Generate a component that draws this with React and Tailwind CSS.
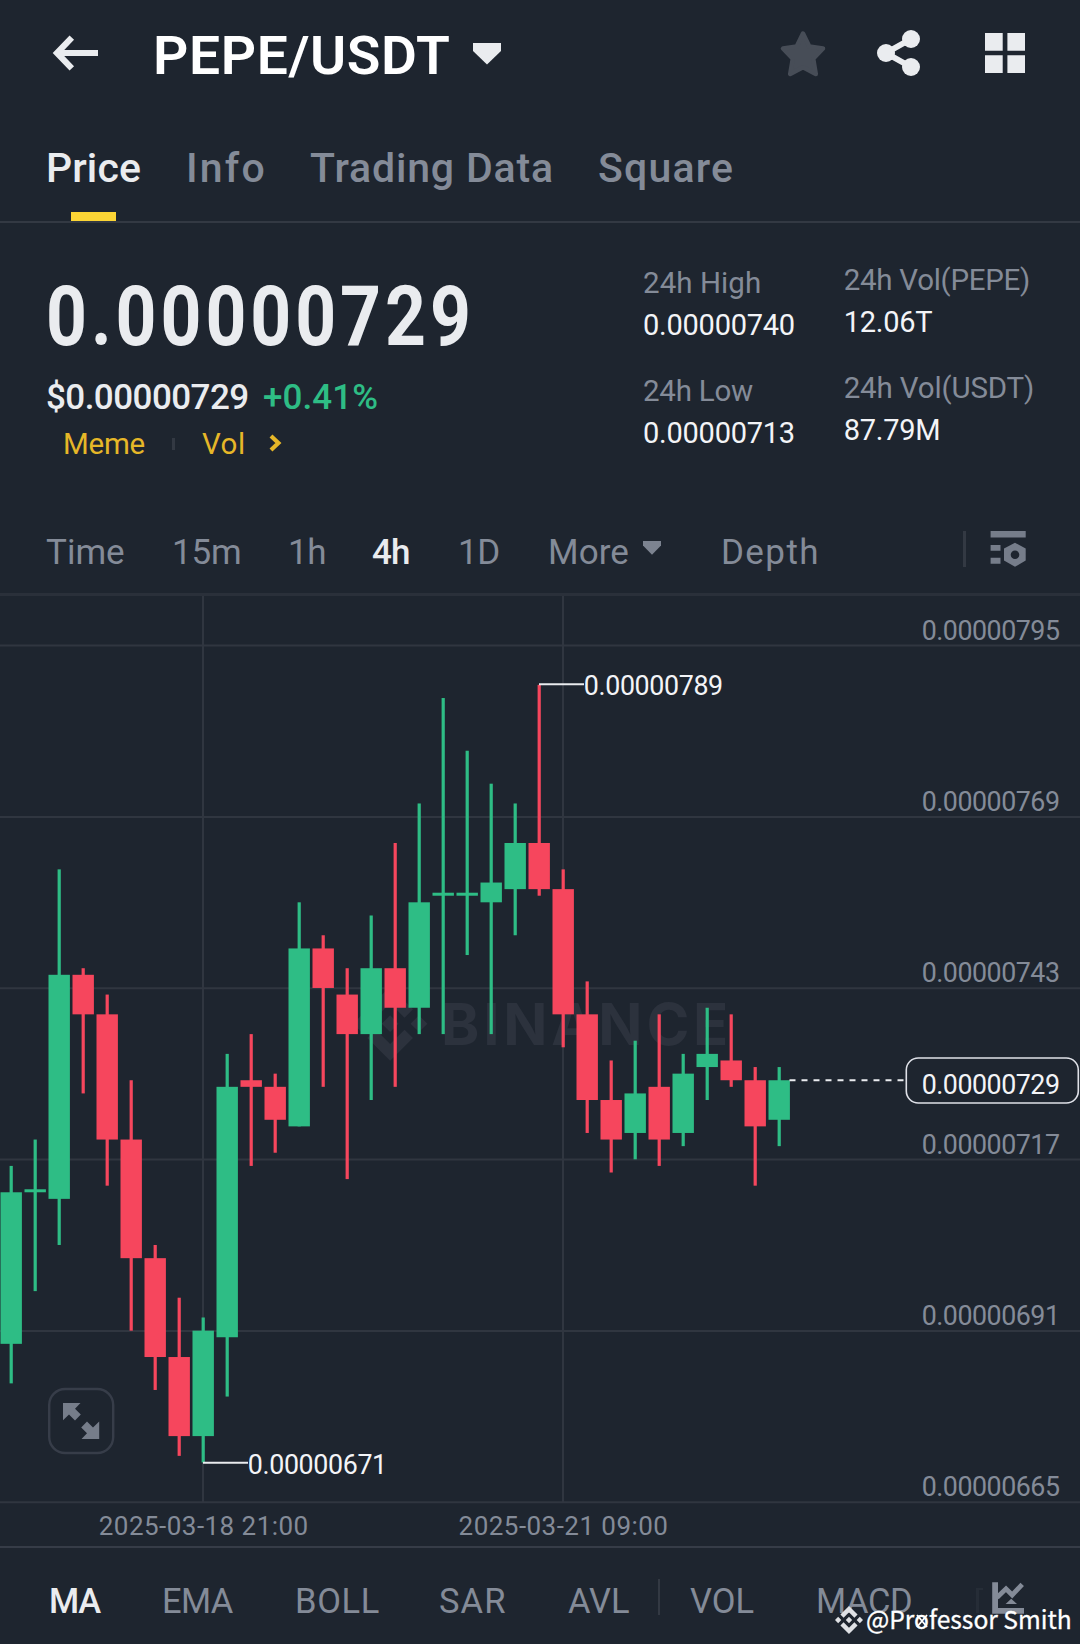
const UP = "#2ebd85";
const DOWN = "#f6465d";
const GRID = "#303640";

const BINANCE_PATH =
  "M16.624 13.9202l2.7175 2.7154-7.353 7.353-7.353-7.352 2.7175-2.7164 4.6355 4.6595 4.6356-4.6595zm4.6366-4.6366L24 12l-2.7154 2.7164L18.5682 12l2.6924-2.7164zm-9.272.001l2.7163 2.6914-2.7164 2.7174v-.001L9.2721 12l2.7164-2.7154zm-9.2722-.001L5.4088 12l-2.6914 2.6924L0 12l2.7164-2.7164zM11.9885.0115l7.353 7.329-2.7174 2.7154-4.6356-4.6356-4.6355 4.6595-2.7174-2.7154 7.353-7.353z";

// [open, high, low, close] in units of 1e-8 USDT
const candles = [
  [689, 716, 683, 712],
  [712, 720, 697, 712],
  [711, 761, 704, 745],
  [745, 746, 727, 739],
  [739, 742, 713, 720],
  [720, 729, 691, 702],
  [702, 704, 682, 687],
  [687, 696, 672, 675],
  [675, 693, 671, 691],
  [690, 733, 681, 728],
  [729, 736, 716, 728],
  [728, 730, 718, 723],
  [722, 756, 722, 749],
  [749, 751, 728, 743],
  [742, 746, 714, 736],
  [736, 754, 726, 746],
  [746, 765, 728, 740],
  [740, 771, 736, 756],
  [757, 787, 736, 757],
  [757, 779, 748, 757],
  [756, 774, 736, 759],
  [758, 771, 751, 765],
  [765, 789, 757, 758],
  [758, 761, 734, 739],
  [739, 744, 721, 726],
  [726, 732, 715, 720],
  [721, 735, 717, 727],
  [728, 739, 716, 720],
  [721, 733, 719, 730],
  [731, 740, 726, 733],
  [732, 739, 728, 729],
  [729, 731, 713, 722],
  [723, 731, 719, 729],
];

const priceTicks = [795, 769, 743, 717, 691, 665];
const yOf = (p) => 645.3 + (795 - p) * 6.59;
const xOf = (i) => 11.2 + 24 * i;

function Candle({ i, data }) {
  const [open, high, low, close] = data;
  const color = close >= open ? UP : DOWN;
  const top = yOf(Math.max(open, close));
  const bottom = yOf(Math.min(open, close));
  const x = xOf(i);
  const flat = open === close;
  return (
    <g fill={color}>
      <rect x={x - 1.6} y={yOf(high)} width={3.2} height={yOf(low) - yOf(high)} />
      <rect x={x - 10.7} y={flat ? top - 3 : top} width={21.4} height={flat ? 3 : bottom - top} />
    </g>
  );
}

function Chart() {
  return (
    <svg width="1080" height="950" viewBox="0 596 1080 950" className="block font-[Roboto,sans-serif]">
      <g stroke={GRID} strokeWidth="2">
        <path d="M203 596V1502M563 596V1502" />
        {priceTicks.map((p) => (
          <path key={p} d={`M0 ${yOf(p) + 0.3}H1080`} />
        ))}
      </g>

      <g fill="#2c323d">
        <path d={BINANCE_PATH} transform="translate(353 986.5) scale(3.1)" />
        <text x="441" y="1045" fontSize="58" fontWeight="700" letterSpacing="3.8" fontFamily="Inter, sans-serif">
          BINANCE
        </text>
      </g>

      {candles.map((c, i) => (
        <Candle key={i} i={i} data={c} />
      ))}

      <g stroke="#eaecef" strokeWidth="2">
        <path d="M539 684.3H584" />
        <path d="M203 1462.7H248" />
        <path d="M789.5 1080.2H905" strokeDasharray="6 6" />
      </g>
      <rect x="906.3" y="1058" width="172" height="45" rx="12" fill="#1e252f" stroke="#dfe1e8" strokeWidth="1.6" />

      <g fontSize="26.8" letterSpacing="-0.48" fill="#848b98">
        {priceTicks.map((p) => (
          <text key={p} x="921.7" y={yOf(p) - 5.8}>
            {`0.00000${p}`}
          </text>
        ))}
        <text x="921.7" y="1094" fill="#f3f4f7">0.00000729</text>
        <text x="583.8" y="694.7" fill="#f3f4f7" letterSpacing="-0.36">0.00000789</text>
        <text x="247.8" y="1473.7" fill="#f3f4f7" letterSpacing="-0.36">0.00000671</text>
      </g>
      <g fontSize="26" letterSpacing="0.46" fill="#848b98">
        <text x="98.8" y="1534.7">2025-03-18 21:00</text>
        <text x="458.6" y="1534.7">2025-03-21 09:00</text>
      </g>

      <rect x="49.2" y="1389" width="64" height="64" rx="16" fill="#1e252f" stroke="#373d49" strokeWidth="2.4" />
      <g fill="#767d8a">
        <path d="M63 1403H80.5L75 1408.7L80.8 1414.5L75 1420.5L69 1414.5L63 1420.3Z" />
        <path d="M99.2 1439H81.5L87 1433.3L81.2 1427.5L87 1421.5L93 1427.5L99.2 1421.5Z" />
      </g>
    </svg>
  );
}

function Header() {
  return (
    <header className="flex h-[110px] items-center">
      <svg width="48" height="38" viewBox="51 34 48 38" className="-mt-1 ml-[51px]">
        <path d="M98 53H57M71.8 37.6L57 53L71.8 68.4" fill="none" stroke="#eaecef" strokeWidth="6.2" />
      </svg>
      <h1 className="mt-px ml-[54px] w-[318px] origin-left scale-x-[1.04] whitespace-nowrap text-[53px] leading-[60px] font-semibold tracking-[0.6px] text-white">
        PEPE/USDT
      </h1>
      <svg width="30" height="24" viewBox="472 42 30 24" className="-mt-[2px] ml-[1px]">
        <path d="M473 43H501V51L487 64.4L473 51Z" fill="#eaecef" />
      </svg>
      <svg width="48" height="50" viewBox="779 29 48 50" className="-mt-[2px] ml-[277px]">
        <path
          d="M803 33.5L809.3 46.5L823 48.5L813.2 58.6L815.8 74L803 67.2L790.2 74L792.8 58.6L783 48.5L796.7 46.5Z"
          fill="#474d57"
          stroke="#474d57"
          strokeWidth="4.5"
          strokeLinejoin="round"
        />
      </svg>
      <svg width="46" height="48" viewBox="876 29 46 48" className="-mt-1 ml-[49px]">
        <g fill="#eaecef">
          <circle cx="911" cy="39" r="9" />
          <circle cx="886" cy="53" r="9" />
          <circle cx="911" cy="67" r="9" />
        </g>
        <path d="M911 39L886 53L911 67" fill="none" stroke="#eaecef" strokeWidth="6" />
      </svg>
      <svg width="40" height="40" viewBox="0 0 40 40" className="-mt-1 ml-[63px]">
        <path d="M0 0H17.7V17.8H0ZM22.4 0H40V17.8H22.4ZM0 22.2H17.7V40H0ZM22.4 22.2H40V40H22.4Z" fill="#eaecef" />
      </svg>
    </header>
  );
}

const tabs = [
  { label: "Price", box: "w-[140px]", text: "tracking-[0.1px] text-[#eaecef]", active: true },
  { label: "Info", box: "w-[124px]", text: "tracking-[2.2px] text-[#848b98]" },
  { label: "Trading Data", box: "w-[288px]", text: "tracking-[0.84px] text-[#848b98]" },
  { label: "Square", box: "w-[160px]", text: "tracking-[1.19px] text-[#848b98]" },
];

function Tabs() {
  return (
    <nav className="flex h-[113px] border-b-2 border-[#333943] pl-[46px] text-[41px] leading-[56px] font-medium">
      {tabs.map((t) => (
        <div key={t.label} className={t.box}>
          <div className="inline-flex h-full flex-col items-center pt-[30px]">
            <span className={`whitespace-nowrap ${t.text}`}>{t.label}</span>
            {t.active && <span className="mt-auto h-[9px] w-[45px] bg-[#fcd535]" />}
          </div>
        </div>
      ))}
    </nav>
  );
}

function Stat({ label, value, labelClass }) {
  return (
    <div className="flex flex-col gap-2 whitespace-nowrap leading-[34px]">
      <span className={`text-[29.5px] text-[#848b98] ${labelClass}`}>{label}</span>
      <span className="text-[29px] tracking-[-0.24px] text-[#f3f4f7]">{value}</span>
    </div>
  );
}

function Summary() {
  return (
    <section className="flex h-[287px]">
      <div className="w-[643px] pt-[52px] pl-[46px]">
        <div className="origin-left scale-x-[0.86] whitespace-nowrap text-[83px] leading-[84px] font-bold tracking-[4.6px] text-[#eaecef]">
          0.00000729
        </div>
        <div className="mt-5 flex text-[35px] leading-[38px] font-medium">
          <span className="w-[217px] tracking-[-0.55px] text-[#eaecef]">$0.00000729</span>
          <span className="tracking-[0.1px] text-[#2ebd85]">+0.41%</span>
        </div>
        <div className="mt-[11px] flex items-center text-[29.5px] leading-8 text-[#e6b728]">
          <span className="ml-[17px] w-[109px] tracking-[-0.22px]">Meme</span>
          <span className="h-3 w-[3px] bg-[#333943]" />
          <span className="ml-[27px] w-[67px] tracking-[0.5px]">Vol</span>
          <svg width="14" height="18" viewBox="0 0 14 18" className="-mt-[2px]">
            <path d="M2 2L9.4 9L2 16" fill="none" stroke="#e6b728" strokeWidth="4.2" />
          </svg>
        </div>
      </div>
      <div className="flex w-[200.7px] flex-col gap-8 pt-[43px]">
        <Stat label="24h High" value="0.00000740" labelClass="tracking-[0.07px]" />
        <Stat label="24h Low" value="0.00000713" labelClass="tracking-[-0.24px]" />
      </div>
      <div className="flex flex-col gap-8 pt-10">
        <Stat label="24h Vol(PEPE)" value="12.06T" labelClass="tracking-[-0.28px]" />
        <Stat label="24h Vol(USDT)" value="87.79M" labelClass="tracking-[-0.15px]" />
      </div>
    </section>
  );
}

const intervals = [
  { label: "Time", cls: "w-[126px]" },
  { label: "15m", cls: "w-[116px] tracking-[-0.2px]" },
  { label: "1h", cls: "w-[84px] tracking-[-0.5px]" },
  { label: "4h", cls: "w-[86px] tracking-[-0.8px] font-medium text-[#eaecef]" },
  { label: "1D", cls: "w-[90px] tracking-[-0.4px]" },
  { label: "More", cls: "w-[95px] tracking-[0.1px]" },
];

function IntervalBar() {
  return (
    <div className="flex h-[86px] items-center border-b-[3px] border-[#2a303a] pt-[2px] pl-[46px] text-[35px] leading-10 text-[#848b98]">
      {intervals.map((t) => (
        <span key={t.label} className={`whitespace-nowrap ${t.cls}`}>
          {t.label}
        </span>
      ))}
      <svg width="18" height="14" viewBox="0 0 18 14" className="-mt-[9px]">
        <path d="M0 0H18V4.5L9 13.7L0 4.5Z" fill="#7c8390" />
      </svg>
      <span className="ml-[60px] w-[242px] tracking-[1.4px]">Depth</span>
      <span className="-mt-[8px] h-9 w-[3px] bg-[#333943]" />
      <svg width="36" height="37" viewBox="990 530 36 37" className="-mt-[8px] ml-[24px]" fill="#767d8a">
        <path d="M990.6 531H1025.7V537.6H990.6ZM990.6 545H1000.5V550.7H990.6ZM990.6 557.8H1000.5V563.8H990.6Z" />
        <path
          fillRule="evenodd"
          d="M1015 542.8L1025.7 548.6V560.6L1015 566.8L1004 560.6V548.6ZM1015 550.4A4.3 4.3 0 1 0 1015 559A4.3 4.3 0 1 0 1015 550.4Z"
        />
      </svg>
    </div>
  );
}

const indicators = [
  { label: "MA", cls: "w-[113px] tracking-[-1.2px] font-medium text-[#eaecef]" },
  { label: "EMA", cls: "w-[133px] tracking-[-0.6px]" },
  { label: "BOLL", cls: "w-[144px] tracking-[0.63px]" },
  { label: "SAR", cls: "w-[129px] tracking-[1.1px]" },
  { label: "AVL", cls: "w-[90px]" },
];

function IndicatorBar() {
  return (
    <div className="flex h-[98px] border-t-2 border-[#363c47] pt-[33px] pl-[49px] text-[34.5px] leading-10 text-[#848b98]">
      {indicators.map((t) => (
        <span key={t.label} className={t.cls}>
          {t.label}
        </span>
      ))}
      <span className="-mt-[2px] h-9 w-[2px] bg-[#333943]" />
      <span className="ml-[30px] w-[126px]">VOL</span>
      <span className="w-[160px] tracking-[-0.4px]">MACD</span>
      <svg width="8" height="25" viewBox="0 0 8 25" className="mt-[7px]" fill="#262d37">
        <path d="M0 0H3V25H0ZM3 0H7V2H3Z" />
      </svg>
      <svg width="34" height="34" viewBox="991 1581 34 34" className="ml-[7px]">
        <path d="M992.2 1582.3H998V1608H1024V1613.8H992.2Z" fill="#848b98" />
        <path d="M997 1597.4L1006 1588.8L1012.2 1595L1022.2 1584.4" fill="none" stroke="#848b98" strokeWidth="4.8" />
        <path d="M1011.2 1598.8L1017 1604H1005.6Z" fill="#848b98" />
      </svg>
    </div>
  );
}

function Signature() {
  return (
    <div className="absolute top-[1602px] left-[835px] flex items-center">
      <svg width="28" height="28" viewBox="0 0 24 24" className="mt-[4px]">
        <path d={BINANCE_PATH} fill="#dfe1e5" />
      </svg>
      <span className="relative ml-[3px] whitespace-nowrap font-['Noto_Sans_CJK_SC',sans-serif] text-[24.6px] leading-8 text-white [-webkit-text-stroke:0.3px_white]">
        @Professor Smith
        <svg width="12" height="14" viewBox="0 0 12 14" className="absolute top-[12px] left-[50px]">
          <path d="M1 1L11 13M11 1L1 13" stroke="#fff" strokeWidth="1.8" />
        </svg>
      </span>
    </div>
  );
}

export default function App() {
  return (
    <div className="relative h-[1644px] w-[1080px] overflow-hidden bg-[#1e252f] font-[Roboto,sans-serif]">
      <Header />
      <Tabs />
      <Summary />
      <IntervalBar />
      <Chart />
      <IndicatorBar />
      <Signature />
    </div>
  );
}
